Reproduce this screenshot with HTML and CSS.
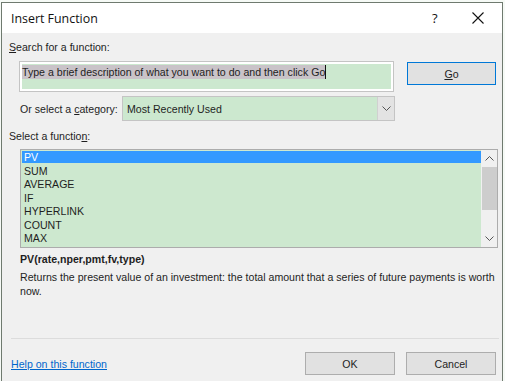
FILE: index.html
```html
<!DOCTYPE html>
<html lang="en">
<head>
  <meta charset="UTF-8">
  <title>Insert Function</title>
  <link rel="stylesheet" href="styles.css">
</head>
<body>
  <div class="dialog">
    <div class="titlebar">
      <span class="title">Insert Function</span>
      <span class="help-btn">?</span>
      <span class="close-btn">
        <svg width="12" height="12" viewBox="0 0 12 12"><path d="M0.5 0.5L11.5 11.5M11.5 0.5L0.5 11.5" stroke="#111" stroke-width="1.1" fill="none"/></svg>
      </span>
    </div>
    <div class="content">
      <div class="label"><u>S</u>earch for a function:</div>
      <div class="search-row">
        <div class="search-box"><span class="selected-text">Type a brief description of what you want to do and then click Go</span><span class="caret"></span></div>
        <button class="btn btn-go"><u>G</u>o</button>
      </div>
      <div class="category-row">
        <span class="cat-label">Or select a <u>c</u>ategory:</span>
        <div class="select">
          <span class="select-value">Most Recently Used</span>
          <span class="select-arrow">
            <svg width="9" height="5" viewBox="0 0 9 5"><path d="M0.5 0.5L4.5 4.5L8.5 0.5" stroke="#555" fill="none"/></svg>
          </span>
        </div>
      </div>
      <div class="label label-list">Select a functio<u>n</u>:</div>
      <div class="listbox">
        <ul class="items">
          <li class="active">PV</li>
          <li>SUM</li>
          <li>AVERAGE</li>
          <li>IF</li>
          <li>HYPERLINK</li>
          <li>COUNT</li>
          <li>MAX</li>
        </ul>
        <div class="scrollbar">
          <span class="arrow"><svg width="9" height="5" viewBox="0 0 9 5"><path d="M0.5 4.5L4.5 0.5L8.5 4.5" stroke="#555" fill="none"/></svg></span>
          <span class="thumb"></span>
          <span class="arrow arrow-down"><svg width="9" height="5" viewBox="0 0 9 5"><path d="M0.5 0.5L4.5 4.5L8.5 0.5" stroke="#555" fill="none"/></svg></span>
        </div>
      </div>
      <div class="signature">PV(rate,nper,pmt,fv,type)</div>
      <div class="description">Returns the present value of an investment: the total amount that a series of future payments is worth now.</div>
      <div class="separator"></div>
      <div class="footer">
        <a href="#" class="help-link">Help on this function</a>
        <button class="btn btn-ok">OK</button>
        <button class="btn btn-cancel">Cancel</button>
      </div>
    </div>
  </div>
</body>
</html>
```

FILE: styles.css
```css
body {
  margin: 0;
  background: #f6faf6;
  font-family: "Liberation Sans", Arial, sans-serif;
  font-size: 10.6px;
  color: #1e1e1e;
}
u {
  text-decoration: underline;
}
.dialog {
  width: 500px;
  height: 378px;
  margin: 2px 0 0 1px;
  border: 1px solid #6f7a6f;
  border-bottom: none;
  background: #f0f0f0;
}
.titlebar {
  height: 30px;
  background: #fff;
  display: flex;
  align-items: center;
}
.title {
  font-family: "Open Sans", sans-serif;
  font-size: 12.4px;
  margin-left: 9px;
  flex: 1;
  color: #111;
}
.help-btn {
  font-family: "Open Sans", sans-serif;
  font-size: 13px;
  width: 14px;
  margin-right: 26px;
  color: #111;
}
.close-btn {
  display: flex;
  margin-right: 18px;
}
.content {
  padding: 7px 6px 0 7px;
}
.label {
  height: 14px;
  line-height: 14px;
}
.search-row {
  display: flex;
  align-items: flex-start;
  margin-top: 7px;
  padding-left: 10px;
}
.search-box {
  width: 371px;
  height: 26px;
  border: 1px solid #c4c4c4;
  background: #cce8cf;
  box-shadow: inset 0 0 0 2px #fff;
  padding: 3px 0 0 2px;
  white-space: nowrap;
}
.selected-text {
  background: #c9c3c8;
  line-height: 14px;
  display: inline-block;
}
.caret {
  display: inline-block;
  width: 1px;
  height: 14px;
  background: #111;
  vertical-align: top;
}
.btn {
  font-family: "Liberation Sans", Arial, sans-serif;
  font-size: 10.6px;
  color: #1e1e1e;
  background: #e1e1e1;
  border: 1px solid #adadad;
  height: 23px;
  padding: 0;
}
.btn-go {
  width: 89px;
  margin-left: 13px;
  margin-top: 1px;
  border-color: #0078d7;
}
.category-row {
  display: flex;
  align-items: center;
  margin-top: 4px;
  padding-left: 11px;
}
.cat-label {
  width: 102px;
  white-space: nowrap;
}
.select {
  width: 271px;
  height: 23px;
  border: 1px solid #c4c4c4;
  background: #cce8cf;
  display: flex;
  align-items: center;
}
.select-value {
  flex: 1;
  padding-left: 4px;
}
.select-arrow {
  width: 16px;
  height: 23px;
  background: #e3e3e3;
  border-left: 1px solid #d0d0d0;
  display: flex;
  align-items: center;
  justify-content: center;
}
.label-list {
  margin-top: 8px;
}
.listbox {
  margin: 6px 0 0 11px;
  width: 476px;
  height: 97px;
  border: 1px solid #acacac;
  background: #cde8cf;
  display: flex;
}
.items {
  list-style: none;
  margin: 0;
  padding: 1px 0 0 1px;
  flex: 1;
}
.items li {
  height: 13.5px;
  line-height: 13px;
  padding-left: 2px;
}
.items li.active {
  background: #3399ff;
  color: #fff;
  height: 12px;
  line-height: 12px;
  margin-bottom: 1.5px;
}
.scrollbar {
  width: 16px;
  background: #f0f0f0;
  display: flex;
  flex-direction: column;
  align-items: center;
}
.scrollbar .arrow {
  height: 17px;
  display: flex;
  align-items: center;
}
.scrollbar .thumb {
  width: 15px;
  height: 43px;
  background: #cdcdcd;
}
.scrollbar .arrow-down {
  margin-top: auto;
}
.signature {
  font-weight: bold;
  margin: 4px 0 0 11px;
  line-height: 14px;
}
.description {
  margin: 4px 0 0 11px;
  line-height: 14px;
  width: 478px;
}
.separator {
  margin: 40px 0 0 2px;
  height: 1px;
  background: #dcdcdc;
  width: 488px;
}
.footer {
  display: flex;
  align-items: center;
  margin-top: 13px;
}
.help-link {
  color: #0066cc;
  flex: 1;
  margin-left: 2px;
}
.btn-ok {
  width: 90px;
}
.btn-cancel {
  width: 90px;
  margin-left: 11px;
}
```
